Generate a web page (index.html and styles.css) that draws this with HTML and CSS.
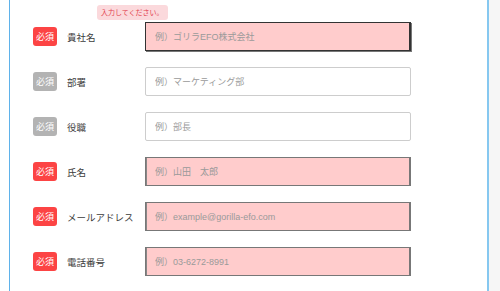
FILE: index.html
```html
<!DOCTYPE html>
<html lang="ja">
<head>
    <meta charset="UTF-8">
    <meta name="viewport" content="width=device-width, initial-scale=1.0">
    <title>入力フォーム</title>
    <link rel="stylesheet" href="styles.css">
</head>
<body>
    <div class="page">
        <form class="panel">
            <div class="form-row">
                <span class="badge">必須</span>
                <label class="label">貴社名</label>
                <input type="text" class="field error focused" placeholder="例）ゴリラEFO株式会社">
                <span class="tip">入力してください。</span>
            </div>
            <div class="form-row">
                <span class="badge optional">必須</span>
                <label class="label">部署</label>
                <input type="text" class="field" placeholder="例）マーケティング部">
            </div>
            <div class="form-row">
                <span class="badge optional">必須</span>
                <label class="label">役職</label>
                <input type="text" class="field" placeholder="例）部長">
            </div>
            <div class="form-row">
                <span class="badge">必須</span>
                <label class="label">氏名</label>
                <input type="text" class="field error" placeholder="例）山田　太郎">
            </div>
            <div class="form-row">
                <span class="badge">必須</span>
                <label class="label">メールアドレス</label>
                <input type="text" class="field error" placeholder="例）example@gorilla-efo.com">
            </div>
            <div class="form-row">
                <span class="badge">必須</span>
                <label class="label">電話番号</label>
                <input type="text" class="field error" placeholder="例）03-6272-8991">
            </div>
        </form>
    </div>
</body>
</html>
```

FILE: styles.css
```css
body {
    margin: 0;
    background-color: #f6f6f6;
    font-family: "Liberation Sans", "Noto Sans CJK JP", sans-serif;
    color: #444;
}
.page {
    width: 489px;
    padding-left: 9px;
    box-sizing: border-box;
    background: #fff;
}
.panel {
    height: 291px;
    box-sizing: border-box;
    border-left: 1px solid #5fb2ea;
    border-right: 2px solid #86c8f0;
    padding: 22px 0 0 23px;
    margin: 0;
}
.form-row {
    position: relative;
    display: flex;
    align-items: center;
    height: 29px;
    margin-bottom: 16px;
}
.badge {
    width: 24px;
    height: 19px;
    line-height: 19px;
    text-align: center;
    background-color: #fc4444;
    color: #fff;
    font-size: 9px;
    border-radius: 3px;
    font-family: "Noto Sans CJK JP", sans-serif;
}
.badge.optional {
    background-color: #b3b3b3;
}
.label {
    width: 78px;
    margin-left: 10px;
    font-size: 9.5px;
    color: #3c3c3c;
    font-family: "Noto Sans CJK JP", sans-serif;
}
.field {
    width: 266px;
    height: 29px;
    box-sizing: border-box;
    padding: 0 9px;
    border: 1px solid #cdcdcd;
    border-radius: 2px;
    font-size: 9px;
    font-family: "Liberation Sans", "Noto Sans CJK JP", sans-serif;
    background: #fff;
    outline: none;
}
.field::placeholder {
    color: #9a9a9a;
}
.field.error {
    background-color: #ffcccc;
    border: 1px solid #777;
    border-right-width: 2px;
    border-radius: 0;
    box-shadow: inset 1px 0 0 #888;
}
.field.focused {
    border-color: #333;
    box-shadow: 1px 1px 0 #777;
}
.tip {
    position: absolute;
    left: 64px;
    top: -17px;
    padding: 0 4px;
    height: 15px;
    line-height: 15px;
    background-color: #fbd9dc;
    color: #e2404e;
    font-size: 7px;
    border-radius: 3px;
    font-family: "Noto Sans CJK JP", sans-serif;
}
```
